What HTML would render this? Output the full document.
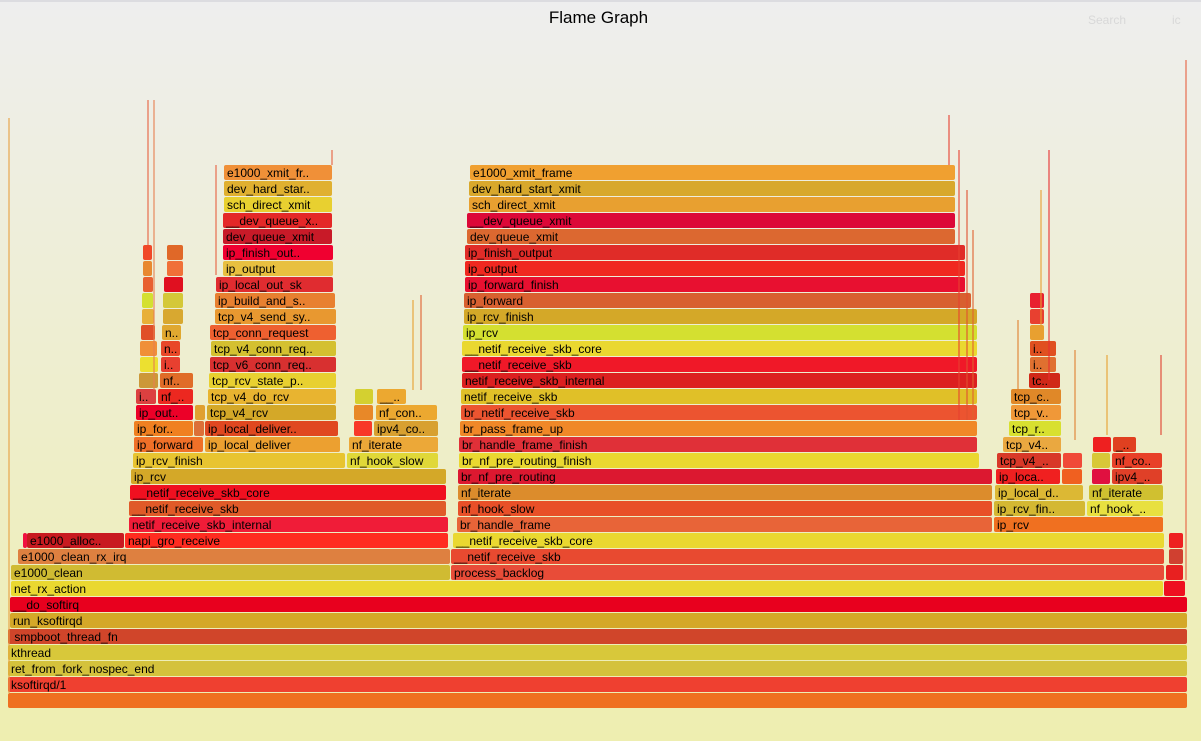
<!DOCTYPE html>
<html><head><meta charset="utf-8"><style>
html,body{margin:0;padding:0}
body{width:1201px;height:741px;position:relative;overflow:hidden;background:linear-gradient(#eeeeee 0%,#eeeeb0 100%);font-family:"Liberation Sans",sans-serif}
#top{position:absolute;left:0;top:0;width:1201px;height:2px;background:#dcdce0}
#t{position:absolute;left:0;width:1197px;top:8px;text-align:center;font-size:17px;color:#000}
.s{position:absolute;top:13px;font-size:12px;color:#d8d8d8}
.f{position:absolute;height:15px;border-radius:2px;font-size:12px;line-height:16px;color:#000;padding-left:3px;box-sizing:border-box;white-space:nowrap;overflow:hidden}
.l{position:absolute;width:2px;opacity:.55}
</style></head><body>
<div id="top"></div>
<div id="t">Flame Graph</div>
<div class="s" style="left:1088px">Search</div>
<div class="s" style="left:1172px">ic</div>

<div class="f" style="left:8px;top:693px;width:1179px;background:#ef7020"></div>
<div class="f" style="left:8px;top:677px;width:1179px;background:#ef4030">ksoftirqd/1</div>
<div class="f" style="left:8px;top:661px;width:1179px;background:#d4c23c">ret_from_fork_nospec_end</div>
<div class="f" style="left:8px;top:645px;width:1179px;background:#d8c83a">kthread</div>
<div class="f" style="left:8px;top:629px;width:1179px;background:#d0452a">&nbsp;smpboot_thread_fn</div>
<div class="f" style="left:10px;top:613px;width:1177px;background:#d4a828">run_ksoftirqd</div>
<div class="f" style="left:10px;top:597px;width:1177px;background:#e8001e">__do_softirq</div>
<div class="f" style="left:11px;top:581px;width:1152px;background:#ead830">net_rx_action</div>
<div class="f" style="left:1164px;top:581px;width:21px;background:#ee1020"></div>
<div class="f" style="left:11px;top:565px;width:439px;background:#d0bb32">e1000_clean</div>
<div class="f" style="left:451px;top:565px;width:713px;background:#e84c38">process_backlog</div>
<div class="f" style="left:1166px;top:565px;width:17px;background:#e82020"></div>
<div class="f" style="left:18px;top:549px;width:432px;background:#de8040">e1000_clean_rx_irq</div>
<div class="f" style="left:451px;top:549px;width:713px;background:#e84a30">__netif_receive_skb</div>
<div class="f" style="left:1169px;top:549px;width:14px;background:#d04030"></div>
<div class="f" style="left:23px;top:533px;width:4px;background:#f01040"></div>
<div class="f" style="left:27px;top:533px;width:97px;background:#c81a20">e1000_alloc..</div>
<div class="f" style="left:125px;top:533px;width:323px;background:#ff2c20">napi_gro_receive</div>
<div class="f" style="left:453px;top:533px;width:711px;background:#ead830">__netif_receive_skb_core</div>
<div class="f" style="left:1169px;top:533px;width:14px;background:#ee2020"></div>
<div class="f" style="left:129px;top:517px;width:319px;background:#f01c38">netif_receive_skb_internal</div>
<div class="f" style="left:457px;top:517px;width:535px;background:#e86438">br_handle_frame</div>
<div class="f" style="left:994px;top:517px;width:169px;background:#f07020">ip_rcv</div>
<div class="f" style="left:129px;top:501px;width:317px;background:#e05a28">__netif_receive_skb</div>
<div class="f" style="left:458px;top:501px;width:534px;background:#e85028">nf_hook_slow</div>
<div class="f" style="left:994px;top:501px;width:91px;background:#d4b832">ip_rcv_fin..</div>
<div class="f" style="left:1087px;top:501px;width:76px;background:#e8e040">nf_hook_..</div>
<div class="f" style="left:130px;top:485px;width:316px;background:#f01020">__netif_receive_skb_core</div>
<div class="f" style="left:458px;top:485px;width:534px;background:#dc8c2c">nf_iterate</div>
<div class="f" style="left:995px;top:485px;width:88px;background:#dcb834">ip_local_d..</div>
<div class="f" style="left:1089px;top:485px;width:74px;background:#d0c030">nf_iterate</div>
<div class="f" style="left:131px;top:469px;width:315px;background:#d4a828">ip_rcv</div>
<div class="f" style="left:458px;top:469px;width:534px;background:#dc1830">br_nf_pre_routing</div>
<div class="f" style="left:996px;top:469px;width:64px;background:#f02020">ip_loca..</div>
<div class="f" style="left:1062px;top:469px;width:20px;background:#f06020"></div>
<div class="f" style="left:1092px;top:469px;width:18px;background:#e01040"></div>
<div class="f" style="left:1112px;top:469px;width:50px;background:#e04028">ipv4_..</div>
<div class="f" style="left:133px;top:453px;width:212px;background:#e8c430">ip_rcv_finish</div>
<div class="f" style="left:347px;top:453px;width:91px;background:#e0d838">nf_hook_slow</div>
<div class="f" style="left:459px;top:453px;width:520px;background:#ead830">br_nf_pre_routing_finish</div>
<div class="f" style="left:997px;top:453px;width:64px;background:#d83828">tcp_v4_..</div>
<div class="f" style="left:1063px;top:453px;width:19px;background:#f04a38"></div>
<div class="f" style="left:1092px;top:453px;width:18px;background:#d8c838"></div>
<div class="f" style="left:1112px;top:453px;width:50px;background:#e84028">nf_co..</div>
<div class="f" style="left:134px;top:437px;width:69px;background:#f07028">ip_forward</div>
<div class="f" style="left:205px;top:437px;width:135px;background:#eca030">ip_local_deliver</div>
<div class="f" style="left:349px;top:437px;width:89px;background:#eca838">nf_iterate</div>
<div class="f" style="left:459px;top:437px;width:518px;background:#e03038">br_handle_frame_finish</div>
<div class="f" style="left:1003px;top:437px;width:58px;background:#eaa840">tcp_v4..</div>
<div class="f" style="left:1093px;top:437px;width:18px;background:#ee2020"></div>
<div class="f" style="left:1113px;top:437px;width:23px;background:#e04020">_..</div>
<div class="f" style="left:134px;top:421px;width:59px;background:#f08020">ip_for..</div>
<div class="f" style="left:194px;top:421px;width:10px;background:#dc7038"></div>
<div class="f" style="left:205px;top:421px;width:133px;background:#e04820">ip_local_deliver..</div>
<div class="f" style="left:354px;top:421px;width:18px;background:#f83828"></div>
<div class="f" style="left:374px;top:421px;width:64px;background:#d8a030">ipv4_co..</div>
<div class="f" style="left:460px;top:421px;width:517px;background:#f08828">br_pass_frame_up</div>
<div class="f" style="left:1009px;top:421px;width:52px;background:#d8e030">tcp_r..</div>
<div class="f" style="left:136px;top:405px;width:57px;background:#ec0028">ip_out..</div>
<div class="f" style="left:195px;top:405px;width:10px;background:#e0a030"></div>
<div class="f" style="left:207px;top:405px;width:129px;background:#d4a828">tcp_v4_rcv</div>
<div class="f" style="left:354px;top:405px;width:19px;background:#e88828"></div>
<div class="f" style="left:376px;top:405px;width:61px;background:#eca830">nf_con..</div>
<div class="f" style="left:461px;top:405px;width:516px;background:#ec5430">br_netif_receive_skb</div>
<div class="f" style="left:1011px;top:405px;width:50px;background:#f09838">tcp_v..</div>
<div class="f" style="left:136px;top:389px;width:20px;background:#dc4040">i..</div>
<div class="f" style="left:158px;top:389px;width:35px;background:#ec2820">nf_..</div>
<div class="f" style="left:208px;top:389px;width:128px;background:#e8b430">tcp_v4_do_rcv</div>
<div class="f" style="left:355px;top:389px;width:18px;background:#d4d030"></div>
<div class="f" style="left:377px;top:389px;width:29px;background:#eca830">__..</div>
<div class="f" style="left:461px;top:389px;width:516px;background:#e0c028">netif_receive_skb</div>
<div class="f" style="left:1011px;top:389px;width:50px;background:#e08828">tcp_c..</div>
<div class="f" style="left:139px;top:373px;width:19px;background:#cc9838"></div>
<div class="f" style="left:160px;top:373px;width:33px;background:#e06c28">nf..</div>
<div class="f" style="left:209px;top:373px;width:127px;background:#e8d030">tcp_rcv_state_p..</div>
<div class="f" style="left:462px;top:373px;width:515px;background:#dc2020">netif_receive_skb_internal</div>
<div class="f" style="left:1029px;top:373px;width:31px;background:#d02818">tc..</div>
<div class="f" style="left:140px;top:357px;width:18px;background:#ece030"></div>
<div class="f" style="left:161px;top:357px;width:19px;background:#e84030">i..</div>
<div class="f" style="left:210px;top:357px;width:126px;background:#d83030">tcp_v6_conn_req..</div>
<div class="f" style="left:462px;top:357px;width:515px;background:#f01828">__netif_receive_skb</div>
<div class="f" style="left:1030px;top:357px;width:26px;background:#e07030">i..</div>
<div class="f" style="left:140px;top:341px;width:17px;background:#f09038"></div>
<div class="f" style="left:161px;top:341px;width:19px;background:#e84828">n..</div>
<div class="f" style="left:211px;top:341px;width:125px;background:#d4c030">tcp_v4_conn_req..</div>
<div class="f" style="left:462px;top:341px;width:515px;background:#ead830">__netif_receive_skb_core</div>
<div class="f" style="left:1030px;top:341px;width:26px;background:#e05020">i..</div>
<div class="f" style="left:141px;top:325px;width:14px;background:#e05028"></div>
<div class="f" style="left:162px;top:325px;width:19px;background:#e0a830">n..</div>
<div class="f" style="left:210px;top:325px;width:126px;background:#ee6030">tcp_conn_request</div>
<div class="f" style="left:463px;top:325px;width:514px;background:#d4e030">ip_rcv</div>
<div class="f" style="left:1030px;top:325px;width:14px;background:#e8a030"></div>
<div class="f" style="left:142px;top:309px;width:12px;background:#e8b038"></div>
<div class="f" style="left:163px;top:309px;width:20px;background:#d8a830"></div>
<div class="f" style="left:215px;top:309px;width:121px;background:#e89830">tcp_v4_send_sy..</div>
<div class="f" style="left:464px;top:309px;width:513px;background:#d4a828">ip_rcv_finish</div>
<div class="f" style="left:1030px;top:309px;width:14px;background:#e84030"></div>
<div class="f" style="left:142px;top:293px;width:11px;background:#d4e030"></div>
<div class="f" style="left:163px;top:293px;width:20px;background:#d4c838"></div>
<div class="f" style="left:215px;top:293px;width:120px;background:#e88030">ip_build_and_s..</div>
<div class="f" style="left:464px;top:293px;width:507px;background:#d86030">ip_forward</div>
<div class="f" style="left:1030px;top:293px;width:14px;background:#e82030"></div>
<div class="f" style="left:143px;top:277px;width:10px;background:#e86030"></div>
<div class="f" style="left:164px;top:277px;width:19px;background:#e01020"></div>
<div class="f" style="left:216px;top:277px;width:117px;background:#e02c30">ip_local_out_sk</div>
<div class="f" style="left:465px;top:277px;width:500px;background:#e81030">ip_forward_finish</div>
<div class="f" style="left:143px;top:261px;width:9px;background:#e88830"></div>
<div class="f" style="left:167px;top:261px;width:16px;background:#f07038"></div>
<div class="f" style="left:223px;top:261px;width:110px;background:#e8c040">ip_output</div>
<div class="f" style="left:465px;top:261px;width:500px;background:#f02820">ip_output</div>
<div class="f" style="left:143px;top:245px;width:9px;background:#f04828"></div>
<div class="f" style="left:167px;top:245px;width:16px;background:#e06828"></div>
<div class="f" style="left:223px;top:245px;width:110px;background:#f00030">ip_finish_out..</div>
<div class="f" style="left:465px;top:245px;width:500px;background:#e02c28">ip_finish_output</div>
<div class="f" style="left:223px;top:229px;width:109px;background:#c81a28">dev_queue_xmit</div>
<div class="f" style="left:467px;top:229px;width:488px;background:#dc6830">dev_queue_xmit</div>
<div class="f" style="left:223px;top:213px;width:109px;background:#e42828">__dev_queue_x..</div>
<div class="f" style="left:467px;top:213px;width:488px;background:#dc0838">__dev_queue_xmit</div>
<div class="f" style="left:224px;top:197px;width:108px;background:#e8d030">sch_direct_xmit</div>
<div class="f" style="left:469px;top:197px;width:486px;background:#e8a030">sch_direct_xmit</div>
<div class="f" style="left:224px;top:181px;width:108px;background:#e0b030">dev_hard_star..</div>
<div class="f" style="left:469px;top:181px;width:486px;background:#d8a82c">dev_hard_start_xmit</div>
<div class="f" style="left:224px;top:165px;width:108px;background:#f09038">e1000_xmit_fr..</div>
<div class="f" style="left:470px;top:165px;width:485px;background:#f0a030">e1000_xmit_frame</div>

<!-- thin towers -->
<div class="l" style="left:8px;top:118px;height:575px;background:#e8a040"></div>
<div class="l" style="left:1185px;top:60px;height:520px;background:#e86040"></div>
<div class="l" style="left:147px;top:100px;height:145px;background:#e86040"></div>
<div class="l" style="left:153px;top:100px;height:290px;background:#e88050"></div>
<div class="l" style="left:215px;top:165px;height:110px;background:#e86040"></div>
<div class="l" style="left:331px;top:150px;height:15px;background:#e86040"></div>
<div class="l" style="left:948px;top:115px;height:50px;background:#e84030"></div>
<div class="l" style="left:958px;top:150px;height:270px;background:#e84030"></div>
<div class="l" style="left:966px;top:190px;height:230px;background:#e05030"></div>
<div class="l" style="left:972px;top:230px;height:190px;background:#e06030"></div>
<div class="l" style="left:1048px;top:150px;height:230px;background:#e83030"></div>
<div class="l" style="left:1040px;top:190px;height:150px;background:#e8a030"></div>
<div class="l" style="left:1017px;top:320px;height:70px;background:#e08030"></div>
<div class="l" style="left:1074px;top:350px;height:90px;background:#e08030"></div>
<div class="l" style="left:1106px;top:355px;height:80px;background:#e8a030"></div>
<div class="l" style="left:1160px;top:355px;height:80px;background:#e04030"></div>
<div class="l" style="left:412px;top:300px;height:90px;background:#e8a030"></div>
<div class="l" style="left:420px;top:295px;height:95px;background:#e06030"></div>
</body></html>
